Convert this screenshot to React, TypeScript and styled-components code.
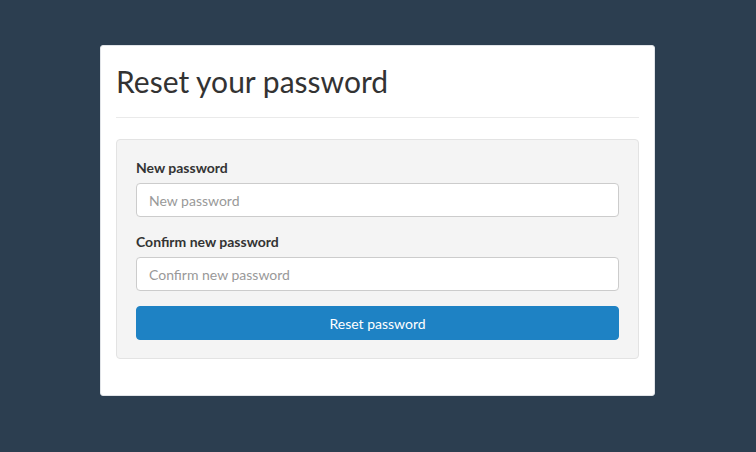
import React from "react";
import styled, { createGlobalStyle } from "styled-components";

const GlobalStyle = createGlobalStyle`
  * { box-sizing: border-box; }
  html, body { margin: 0; padding: 0; }
  body {
    background: #2c3e50;
    font-family: Lato, "Open Sans", "Liberation Sans", sans-serif;
    font-size: 14px;
    line-height: 1.42857;
    color: #333;
  }
`;

const Page = styled.div`
  width: 756px;
  height: 452px;
  display: flex;
  justify-content: flex-start;
  align-items: flex-start;
  padding: 45px 0 0 100px;
`;

const Card = styled.div`
  width: 555px;
  background: #fff;
  border: 1px solid #e1e4e8;
  border-radius: 3px;
  padding: 0 15px 16px;
`;

const Header = styled.div`
  padding: 19px 0 19px;
  border-bottom: 1px solid #eaeaea;
`;

const Title = styled.h1`
  margin: 0;
  font-size: 30px;
  font-weight: 400;
  line-height: 33px;
  color: #333;
`;

const Well = styled.form`
  margin: 21px 0 20px;
  padding: 18px 19px 18px;
  background: #f4f4f4;
  border: 1px solid #e3e3e3;
  border-radius: 4px;
`;

const Group = styled.div`
  margin-bottom: 15px;
`;

const Label = styled.label`
  display: block;
  font-weight: 700;
  font-size: 14px;
  line-height: 20px;
  margin-bottom: 5px;
  color: #333;
`;

const Input = styled.input`
  display: block;
  width: 100%;
  height: 34px;
  padding: 6px 12px;
  font-family: inherit;
  font-size: 14px;
  color: #555;
  background: #fff;
  border: 1px solid #ccc;
  border-radius: 4px;
  outline: none;
  &::placeholder { color: #999; }
`;

const Button = styled.button`
  display: block;
  width: 100%;
  height: 34px;
  padding: 6px 12px;
  font-family: inherit;
  font-size: 14px;
  color: #fff;
  background: #1e82c4;
  border: 1px solid #1e82c4;
  border-radius: 4px;
  cursor: pointer;
`;

export default function App() {
  return (
    <>
      <GlobalStyle />
      <Page>
        <Card>
          <Header>
            <Title>Reset your password</Title>
          </Header>
          <Well onSubmit={(e) => e.preventDefault()}>
            <Group>
              <Label htmlFor="pw">New password</Label>
              <Input id="pw" type="password" placeholder="New password" />
            </Group>
            <Group>
              <Label htmlFor="pw2">Confirm new password</Label>
              <Input id="pw2" type="password" placeholder="Confirm new password" />
            </Group>
            <Button type="submit">Reset password</Button>
          </Well>
        </Card>
      </Page>
    </>
  );
}
